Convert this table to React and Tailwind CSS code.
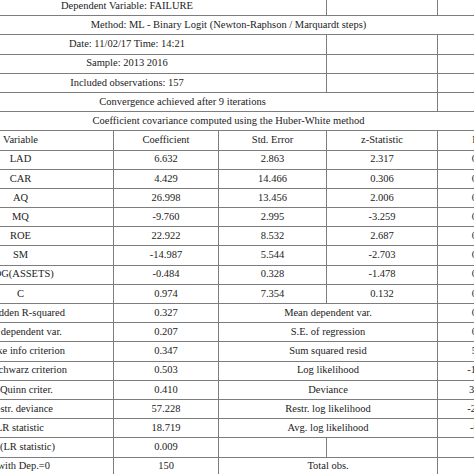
const coefRows = [
  ["LAD", "6.632", "2.863", "2.317", "0.021"],
  ["CAR", "4.429", "14.466", "0.306", "0.760"],
  ["AQ", "26.998", "13.456", "2.006", "0.045"],
  ["MQ", "-9.760", "2.995", "-3.259", "0.001"],
  ["ROE", "22.922", "8.532", "2.687", "0.007"],
  ["SM", "-14.987", "5.544", "-2.703", "0.007"],
  ["LOG(ASSETS)", "-0.484", "0.328", "-1.478", "0.139"],
  ["C", "0.974", "7.354", "0.132", "0.895"],
];

// label cells in the stats block sit at slightly different offsets in the source
const statRows = [
  { label: "McFadden R-squared", pad: "pr-[48px]", v: "0.327", label2: "Mean dependent var.", v2: "0.045" },
  { label: "S.D. dependent var.", pad: "pr-[51px]", v: "0.207", label2: "S.E. of regression", v2: "0.190" },
  { label: "Akaike info criterion", pad: "pr-[48px]", v: "0.347", label2: "Sum squared resid", v2: "5.512" },
  { label: "Schwarz criterion", pad: "pr-[46px]", v: "0.503", label2: "Log likelihood", v2: "-19.254" },
  { label: "Hannan-Quinn criter.", pad: "pr-[60px]", v: "0.410", label2: "Deviance", v2: "38.509" },
  { label: "Restr. deviance", pad: "pr-[60px]", v: "57.228", label2: "Restr. log likelihood", v2: "-28.614" },
  { label: "LR statistic", pad: "pr-[69px]", v: "18.719", label2: "Avg. log likelihood", v2: "-0.123" },
  { label: "Prob(LR statistic)", pad: "pr-[58px]", v: "0.009", split: true },
  { label: "Obs. with Dep.=0", pad: "pr-[63px]", v: "150", label2: "Total obs.", v2: "157" },
];

const cell = "h-[19.2px] border border-[#7d7d7d] p-0 text-center align-middle whitespace-nowrap overflow-hidden";

const InfoRow = ({ text, span = 3, tail = 2 }) => (
  <tr>
    <td colSpan={span} className={cell}>{text}</td>
    {tail >= 2 && <td className={cell}></td>}
    {tail >= 1 && <td className={cell}></td>}
  </tr>
);

export default function App() {
  return (
    <div className="h-[474px] w-[474px] overflow-hidden bg-white">
      <table
        className="-ml-[73px] -mt-[4px] w-[602px] table-fixed text-[10.5px] leading-none text-[#222]"
        style={{ fontFamily: '"Liberation Serif", "Times New Roman", serif' }}
      >
        <colgroup>
          <col className="w-[186px]" />
          <col className="w-[105px]" />
          <col className="w-[108px]" />
          <col className="w-[111px]" />
          <col className="w-[92px]" />
        </colgroup>
        <tbody>
          <InfoRow text="Dependent Variable: FAILURE" />
          <tr>
            <td colSpan={5} className={cell}>
              Method: ML - Binary Logit (Newton-Raphson / Marquardt steps)
            </td>
          </tr>
          <InfoRow text="Date: 11/02/17 Time: 14:21" />
          <InfoRow text="Sample: 2013 2016" />
          <InfoRow text="Included observations: 157" />
          <InfoRow text="Convergence achieved after 9 iterations" span={4} tail={1} />
          <tr>
            <td colSpan={5} className={cell}>
              Coefficient covariance computed using the Huber-White method
            </td>
          </tr>

          <tr>
            <td className={cell}>Variable</td>
            <td className={cell}>Coefficient</td>
            <td className={cell}>Std. Error</td>
            <td className={cell}>z-Statistic</td>
            <td className={cell}>Prob.</td>
          </tr>
          {coefRows.map((r) => (
            <tr key={r[0]}>
              {r.map((v, i) => (
                <td key={i} className={cell}>{v}</td>
              ))}
            </tr>
          ))}

          {statRows.map((r) => (
            <tr key={r.label}>
              <td className={`${cell} !text-right ${r.pad}`}>{r.label}</td>
              <td className={cell}>{r.v}</td>
              {r.split ? (
                <>
                  <td className={cell}></td>
                  <td className={cell}></td>
                  <td className={cell}></td>
                </>
              ) : (
                <>
                  <td colSpan={2} className={cell}>{r.label2}</td>
                  <td className={cell}>{r.v2}</td>
                </>
              )}
            </tr>
          ))}
        </tbody>
      </table>
    </div>
  );
}
